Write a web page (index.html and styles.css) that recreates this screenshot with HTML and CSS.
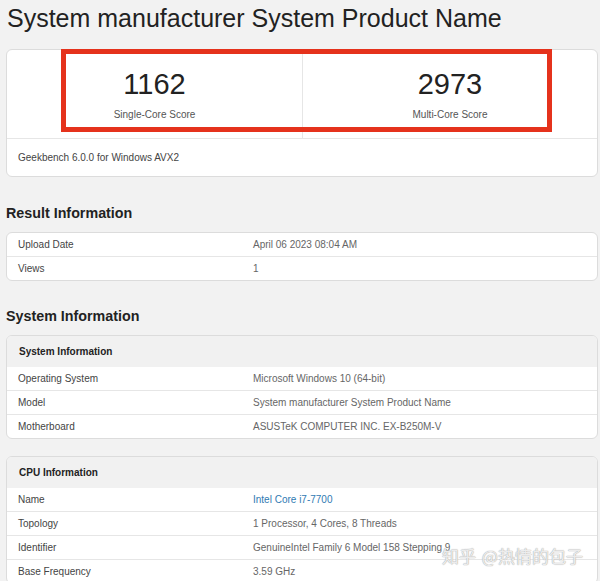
FILE: index.html
```html
<!DOCTYPE html>
<html lang="en">
<head>
<meta charset="utf-8">
<title>System manufacturer System Product Name - Geekbench</title>
<link rel="stylesheet" href="styles.css">
</head>
<body>
<div class="page">
  <h1 class="page-title">System manufacturer System Product Name</h1>

  <div class="card score-card">
    <div class="scores">
      <div class="score">
        <div class="score-value">1162</div>
        <div class="score-label">Single-Core Score</div>
      </div>
      <div class="score">
        <div class="score-value">2973</div>
        <div class="score-label">Multi-Core Score</div>
      </div>
    </div>
    <div class="score-footer">Geekbench 6.0.0 for Windows AVX2</div>
    <div class="highlight"></div>
  </div>

  <h2 class="section-title">Result Information</h2>
  <div class="card">
    <div class="row"><div class="name">Upload Date</div><div class="value">April 06 2023 08:04 AM</div></div>
    <div class="row"><div class="name">Views</div><div class="value">1</div></div>
  </div>

  <h2 class="section-title section-title-2">System Information</h2>
  <div class="card">
    <div class="card-head">System Information</div>
    <div class="row"><div class="name">Operating System</div><div class="value">Microsoft Windows 10 (64-bit)</div></div>
    <div class="row"><div class="name">Model</div><div class="value">System manufacturer System Product Name</div></div>
    <div class="row"><div class="name">Motherboard</div><div class="value">ASUSTeK COMPUTER INC. EX-B250M-V</div></div>
  </div>

  <div class="card card-gap">
    <div class="card-head">CPU Information</div>
    <div class="row"><div class="name">Name</div><div class="value"><a class="link" href="#">Intel Core i7-7700</a></div></div>
    <div class="row"><div class="name">Topology</div><div class="value">1 Processor, 4 Cores, 8 Threads</div></div>
    <div class="row"><div class="name">Identifier</div><div class="value">GenuineIntel Family 6 Model 158 Stepping 9</div></div>
    <div class="row"><div class="name">Base Frequency</div><div class="value">3.59 GHz</div></div>
  </div>
</div>
<div class="watermark">知乎 @热情的包子</div>
</body>
</html>
```

FILE: styles.css
```css
html {
  overflow: hidden;
}

body {
  margin: 0;
  background: #f2f2f2;
  font-family: "Liberation Sans", Arial, "Noto Sans CJK SC", sans-serif;
  color: #333;
}

.page {
  padding: 0 2px 0 6px;
}

.page-title {
  margin: 0 0 13px 1px;
  font-size: 25px;
  line-height: 36px;
  font-weight: normal;
  color: #222;
}

.card {
  background: #fff;
  border: 1px solid #dcdcdc;
  border-radius: 6px;
  overflow: hidden;
}

.score-card {
  position: relative;
  overflow: visible;
}

.scores {
  display: grid;
  grid-template-columns: 1fr 1fr;
  border-bottom: 1px solid #e6e6e6;
}

.score {
  text-align: center;
  padding: 17px 0 16px;
}

.score + .score {
  border-left: 1px solid #e6e6e6;
}

.score-value {
  font-size: 29px;
  line-height: 34px;
  color: #222;
}

.score-label {
  margin-top: 7px;
  font-size: 10px;
  line-height: 14px;
  color: #555;
}

.score-footer {
  height: 37px;
  display: flex;
  align-items: center;
  padding-left: 11px;
  font-size: 10px;
  color: #444;
}

.highlight {
  position: absolute;
  left: 54px;
  top: -1px;
  width: 491px;
  height: 83px;
  box-sizing: border-box;
  border: 5px solid #e5321c;
}

.section-title {
  margin: 26px 0 9px;
  font-size: 14.3px;
  line-height: 20px;
  font-weight: bold;
  color: #222;
}

.section-title-2 {
  margin-top: 25px;
}

.card-head {
  height: 31px;
  display: flex;
  align-items: center;
  padding-left: 12px;
  background: #f1f1f1;
  font-size: 10px;
  font-weight: bold;
  color: #222;
}

.row {
  display: grid;
  grid-template-columns: 235px 1fr;
  align-items: center;
  height: 23px;
  padding-left: 11px;
  font-size: 10px;
  border-bottom: 1px solid #e6e6e6;
}

.row:last-child {
  border-bottom: none;
}

.name {
  color: #444;
}

.value {
  color: #666;
}

.link {
  color: #2f7ab3;
  text-decoration: none;
}

.card-gap {
  margin-top: 17px;
}

.watermark {
  position: absolute;
  left: 442px;
  top: 545px;
  white-space: nowrap;
  font-size: 17px;
  line-height: 21px;
  word-spacing: 2px;
  font-family: "Noto Sans CJK SC", sans-serif;
  color: rgba(255, 255, 255, 0.8);
  text-shadow: 0 0 1px #aaa, 0 0 1px #aaa;
}
```
